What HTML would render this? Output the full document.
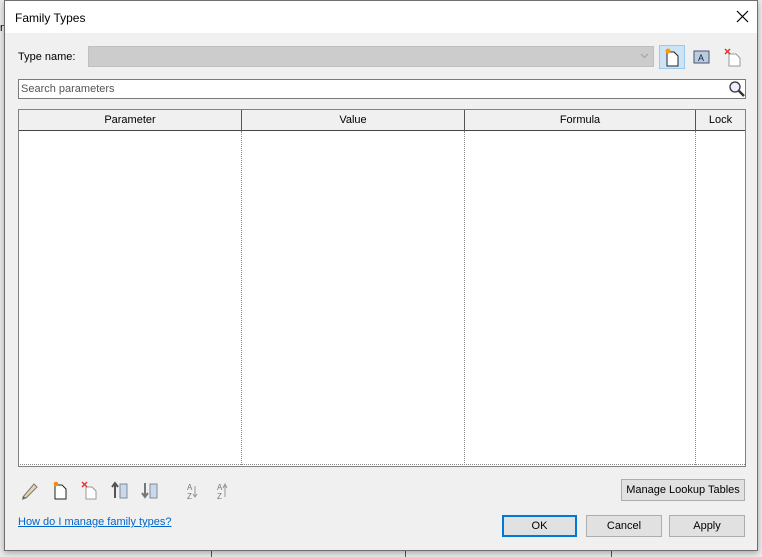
<!DOCTYPE html>
<html><head><style>
body{margin:0;width:762px;height:557px;background:#f0f0f0;position:relative;overflow:hidden;font-family:"Liberation Sans",sans-serif;font-size:11px;color:#000}
.a{position:absolute;white-space:nowrap}
.btn{position:absolute;background:#e1e1e1;border:1px solid #adadad;box-sizing:border-box;text-align:center;font-size:11px;white-space:nowrap}
</style></head><body>
<div class="a" style="left:0;top:0;width:762px;height:557px;background:#ececec"></div>
<div class="a" style="left:211px;top:0;width:1px;height:557px;background:#555"></div>
<div class="a" style="left:405px;top:0;width:1px;height:557px;background:#555"></div>
<div class="a" style="left:611px;top:0;width:1px;height:557px;background:#555"></div>
<div class="a" style="left:0;top:22px;font-size:11px">n</div>
<div class="a" style="left:4px;top:0;width:754px;height:551px;background:#f0f0f0;border:1px solid #6f6f6f;box-sizing:border-box;box-shadow:0 2px 6px rgba(0,0,0,.3)"></div>
<div class="a" style="left:5px;top:1px;width:752px;height:32px;background:#fff"></div>
<div class="a" style="left:15px;top:11px;font-size:12px">Family Types</div>
<svg class="a" style="left:736px;top:10px" width="13" height="13"><path d="M1 1L12 12M12 1L1 12" stroke="#000" stroke-width="1.2"/></svg>
<div class="a" style="left:18px;top:51px">Type name:</div>
<div class="a" style="left:88px;top:46px;width:566px;height:21px;background:#cccccc;border:1px solid #bfbfbf;box-sizing:border-box"></div>
<svg class="a" style="left:640px;top:53px" width="9" height="6"><path d="M1 1L4.5 4.5L8 1" stroke="#a0a0a0" fill="none"/></svg>
<div class="a" style="left:659px;top:45px;width:26px;height:24px;background:#cde4f7;border:1px solid #99c9ef;box-sizing:border-box"></div>
<svg class="a" style="left:663px;top:47px" width="20" height="20"><path d="M4 5H11L15 9V19H4Z" fill="#fff" stroke="#222"/><circle cx="5" cy="4" r="2.5" fill="#f90"/></svg>
<svg class="a" style="left:693px;top:49px" width="18" height="16"><rect x="1" y="2" width="15" height="12" fill="#bcd" stroke="#457"/><text x="5" y="12" font-size="9" fill="#124" font-family="Liberation Sans">A</text></svg>
<svg class="a" style="left:723px;top:47px" width="20" height="20"><path d="M6 7H13L17 11V19H6Z" fill="#fff" stroke="#999"/><path d="M2 2L7 7M7 2L2 7" stroke="#d33" stroke-width="1.5"/></svg>
<div class="a" style="left:18px;top:79px;width:728px;height:20px;background:#fff;border:1px solid #7a7a7a;box-sizing:border-box"></div>
<div class="a" style="left:21px;top:83px;color:#555">Search parameters</div>
<svg class="a" style="left:728px;top:80px" width="18" height="18"><circle cx="7" cy="7" r="5" fill="#eef" stroke="#333" stroke-width="1.3"/><path d="M11 11L16 16" stroke="#333" stroke-width="2.5"/></svg>
<div class="a" style="left:18px;top:109px;width:728px;height:358px;background:#fff;border:1px solid #828282;box-sizing:border-box"></div>
<div class="a" style="left:19px;top:110px;width:726px;height:20px;background:#f0f0f0;border-bottom:1px solid #444"></div>
<div class="a" style="left:241px;top:110px;width:1px;height:21px;background:#555"></div>
<div class="a" style="left:464px;top:110px;width:1px;height:21px;background:#555"></div>
<div class="a" style="left:695px;top:110px;width:1px;height:21px;background:#555"></div>
<div class="a" style="left:241px;top:131px;height:334px;border-left:1px dotted #888"></div>
<div class="a" style="left:464px;top:131px;height:334px;border-left:1px dotted #888"></div>
<div class="a" style="left:695px;top:131px;height:334px;border-left:1px dotted #888"></div>
<div class="a" style="left:20px;top:464px;width:725px;border-top:1px dotted #888"></div>
<div class="a" style="left:19px;top:114px;width:222px;text-align:center">Parameter</div>
<div class="a" style="left:242px;top:114px;width:222px;text-align:center">Value</div>
<div class="a" style="left:465px;top:114px;width:230px;text-align:center">Formula</div>
<div class="a" style="left:696px;top:114px;width:49px;text-align:center">Lock</div>
<svg class="a" style="left:18px;top:479px" width="230" height="22">
<path d="M5 18L16 5L19 8L8 19Z" fill="#e8d8b0" stroke="#777"/><path d="M5 18L4 21L8 19" fill="#555"/>
<path d="M37 6H44L48 10V20H37Z" fill="#fff" stroke="#222"/><circle cx="38" cy="5" r="2.3" fill="#f80"/>
<path d="M68 8H74L78 12V20H68Z" fill="#fff" stroke="#999"/><path d="M64 3L69 8M69 3L64 8" stroke="#d33" stroke-width="1.4"/>
<path d="M97 19V5M94 8L97 4L100 8" stroke="#555" stroke-width="2" fill="none"/><rect x="102" y="5" width="7" height="14" fill="#c8daea" stroke="#889"/>
<path d="M127 4V17M124 14L127 18L130 14" stroke="#777" stroke-width="2" fill="none"/><rect x="132" y="5" width="7" height="14" fill="#c8daea" stroke="#889"/>
<text x="169" y="11" font-size="8" fill="#777" font-family="Liberation Sans">A</text><text x="169" y="20" font-size="8" fill="#777" font-family="Liberation Sans">Z</text><path d="M177 7V18M175 15L177 18L179 15" stroke="#999" fill="none"/>
<text x="199" y="11" font-size="8" fill="#777" font-family="Liberation Sans">A</text><text x="199" y="20" font-size="8" fill="#777" font-family="Liberation Sans">Z</text><path d="M207 6V18M205 9L207 5L209 9" stroke="#999" fill="none"/>
</svg>
<div class="btn" style="left:621px;top:479px;width:124px;height:22px;line-height:20px">Manage Lookup Tables</div>
<div class="a" style="left:18px;top:516px;color:#0066cc;text-decoration:underline">How do I manage family types?</div>
<div class="btn" style="left:502px;top:515px;width:75px;height:22px;line-height:18px;border:2px solid #0078d7">OK</div>
<div class="btn" style="left:586px;top:515px;width:76px;height:22px;line-height:20px">Cancel</div>
<div class="btn" style="left:669px;top:515px;width:76px;height:22px;line-height:20px">Apply</div>
</body></html>
